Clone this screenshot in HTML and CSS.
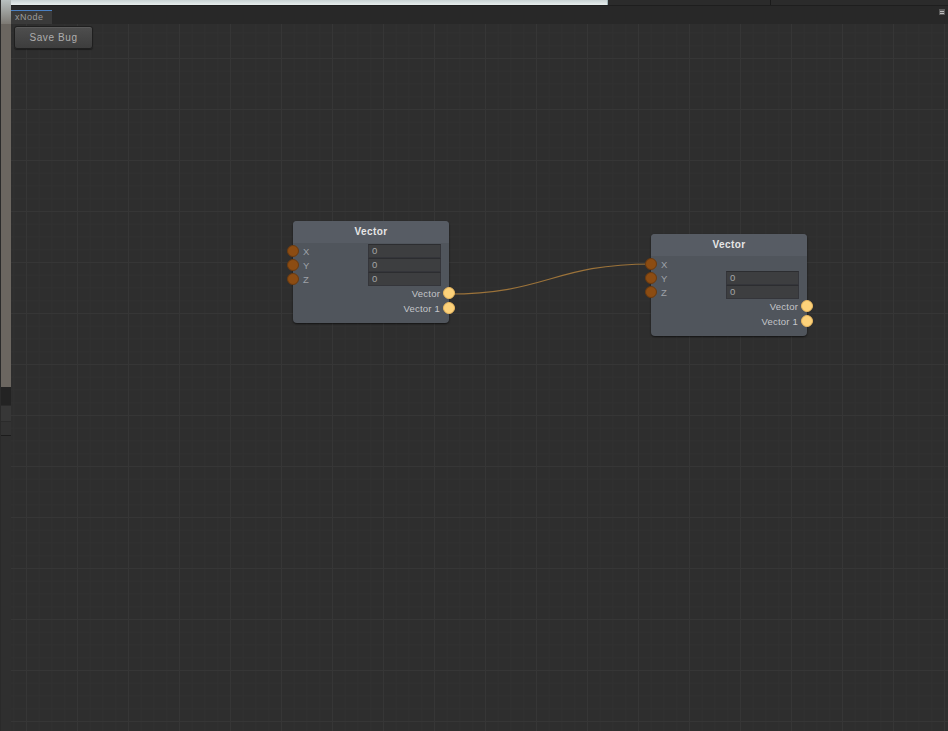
FILE: index.html
```html
<!DOCTYPE html>
<html lang="en">
<head>
    <meta charset="UTF-8">
    <meta name="viewport" content="width=device-width, initial-scale=1.0">
    <title>xNode</title>
    <link rel="stylesheet" href="styles.css">
</head>
<body>
    <div class="window">
        <div class="side">
            <div class="side-top"></div>
            <div class="side-panel"></div>
            <div class="side-tab dark"></div>
            <div class="side-tab"></div>
            <div class="side-tab last"></div>
            <div class="side-rest"></div>
        </div>

        <div class="main">
            <div class="topbar">
                <div class="top-light"></div>
                <div class="top-dark"></div>
                <div class="top-dark right"></div>
            </div>

            <div class="tabbar">
                <div class="tab">xNode</div>
                <svg class="menu-icon" width="6" height="6" viewBox="0 0 6 6">
                    <rect x="0" y="0" width="6" height="6" fill="#5a5a5a"/>
                    <rect x="1" y="2" width="4" height="1" fill="#bbb"/>
                    <rect x="1" y="4" width="4" height="1" fill="#bbb"/>
                </svg>
            </div>

            <div class="canvas">
                <button class="btn">Save Bug</button>

                <!-- connection between the two nodes -->
                <svg class="wires" width="937" height="707">
                    <path d="M 437 270 C 537 270, 541 240, 641 240" fill="none" stroke="#9c733a" stroke-width="1.2"/>
                </svg>

                <div class="node node-a">
                    <div class="node-title">Vector</div>
                    <div class="node-body">
                        <div class="row">
                            <span class="port in"></span>
                            <span class="label">X</span>
                            <span class="field">0</span>
                        </div>
                        <div class="row">
                            <span class="port in"></span>
                            <span class="label">Y</span>
                            <span class="field">0</span>
                        </div>
                        <div class="row">
                            <span class="port in"></span>
                            <span class="label">Z</span>
                            <span class="field">0</span>
                        </div>
                        <div class="row out-row">
                            <span class="label">Vector</span>
                            <span class="port out"></span>
                        </div>
                        <div class="row out-row">
                            <span class="label">Vector 1</span>
                            <span class="port out"></span>
                        </div>
                    </div>
                </div>

                <div class="node node-b">
                    <div class="node-title">Vector</div>
                    <div class="node-body">
                        <div class="row">
                            <span class="port in"></span>
                            <span class="label">X</span>
                        </div>
                        <div class="row">
                            <span class="port in"></span>
                            <span class="label">Y</span>
                            <span class="field">0</span>
                        </div>
                        <div class="row">
                            <span class="port in"></span>
                            <span class="label">Z</span>
                            <span class="field">0</span>
                        </div>
                        <div class="row out-row">
                            <span class="label">Vector</span>
                            <span class="port out"></span>
                        </div>
                        <div class="row out-row">
                            <span class="label">Vector 1</span>
                            <span class="port out"></span>
                        </div>
                    </div>
                </div>
            </div>
        </div>
    </div>
</body>
</html>
```

FILE: styles.css
```css
html, body {
    margin: 0;
    padding: 0;
}

body {
    width: 948px;
    height: 731px;
    overflow: hidden;
    background: #2d2d2d;
    font-family: "Liberation Sans", Arial, sans-serif;
    font-size: 10px;
}

.window {
    display: flex;
    height: 100%;
}

/* left strip (neighbour panel) */
.side {
    width: 11px;
    display: flex;
    flex-direction: column;
    border-left: 1px solid #2a2a2a;
    box-sizing: border-box;
}

.side-top {
    height: 24px;
    background: linear-gradient(#b9c0c0, #7d7973);
}

.side-panel {
    height: 363px;
    background: #6b6660;
}

.side-tab {
    height: 15px;
    background: #373737;
    border-bottom: 1px solid #2b2b2b;
}

.side-tab.dark {
    height: 18px;
    background: #232323;
}

.side-tab.last {
    height: 13px;
    background: #323232;
    border-bottom: 1px solid #1c1c1c;
}

.side-rest {
    flex: 1;
    background: #2f2f2f;
}

.main {
    flex: 1;
    display: flex;
    flex-direction: column;
}

/* strip of the window above */
.topbar {
    height: 5px;
    display: flex;
    border-bottom: 1px solid #1e1e1e;
}

.top-light {
    width: 596px;
    background: linear-gradient(#c9d3d4, #e8eeee);
    border-right: 1px solid #9fb3b8;
}

.top-dark {
    width: 162px;
    background: #2b2b2b;
    border-right: 1px solid #1a1a1a;
}

.top-dark.right {
    flex: 1;
    border-right: none;
}

.tabbar {
    height: 18px;
    background: #282828;
    display: flex;
    align-items: flex-end;
    position: relative;
}

.tab {
    width: 37px;
    height: 13px;
    background: #3a3a3a;
    border-top: 1px solid #4a80c4;
    color: #9c9c9c;
    font-size: 9px;
    letter-spacing: 0.5px;
    line-height: 13px;
    padding-left: 4px;
}

.menu-icon {
    position: absolute;
    right: 3px;
    top: 3px;
}

.canvas {
    flex: 1;
    position: relative;
    background-color: #2e2e2e;
    background-image:
        linear-gradient(to right, #363636 1px, transparent 1px),
        linear-gradient(to bottom, #363636 1px, transparent 1px),
        linear-gradient(to right, #313131 1px, transparent 1px),
        linear-gradient(to bottom, #313131 1px, transparent 1px);
    background-size: 51px 51px, 51px 51px, 12.75px 12.75px, 12.75px 12.75px;
    background-position: 15px 0, 0 34px, 2.25px 0, 0 8.5px;
    padding: 2px 0 0 3px;
}

.btn {
    display: block;
    width: 79px;
    height: 23px;
    border: 1px solid #1f1f1f;
    border-radius: 3px;
    background: linear-gradient(#4e4e4e, #3d3d3d);
    box-shadow: inset 0 1px 0 #5a5a5a, 0 1px 1px rgba(0, 0, 0, 0.4);
    color: #aeaeae;
    font-family: "Liberation Sans", Arial, sans-serif;
    font-size: 10px;
    letter-spacing: 0.6px;
    padding: 0;
}

.wires {
    position: absolute;
    left: 0;
    top: 0;
    pointer-events: none;
}

.node {
    position: absolute;
    width: 156px;
    height: 102px;
    background: #50555c;
    border-radius: 4px;
    box-shadow: 0 1px 2px rgba(0, 0, 0, 0.6);
}

.node-a {
    left: 282px;
    top: 197px;
}

.node-b {
    left: 640px;
    top: 210px;
}

.node-title {
    height: 22px;
    line-height: 22px;
    background: #575c64;
    border-radius: 4px 4px 0 0;
    text-align: center;
    color: #e6e6e6;
    font-weight: bold;
    font-size: 10px;
    letter-spacing: 0.4px;
}

.node-body {
    padding-top: 1px;
}

.row {
    position: relative;
    height: 14px;
    display: flex;
    align-items: center;
    padding-left: 10px;
}

.out-row {
    height: 15px;
    justify-content: flex-end;
    padding-left: 0;
    padding-right: 9px;
}

.label {
    color: #9ea2a8;
    font-size: 9.5px;
    letter-spacing: 0.2px;
}

.out-row .label {
    color: #c4c6ca;
}

.field {
    position: absolute;
    left: 75px;
    top: 0;
    width: 68px;
    height: 12px;
    background: #3d3e40;
    border: 1px solid #34353a;
    border-top-color: #2c2d30;
    color: #a6a6a6;
    font-size: 9.5px;
    line-height: 12px;
    padding-left: 3px;
}

.port {
    position: absolute;
    width: 12px;
    height: 12px;
    border-radius: 50%;
    top: 1px;
    box-sizing: border-box;
}

.port.in {
    left: -6px;
    background: #8c4c12;
    border: 1px solid #6a3a10;
}

.port.out {
    right: -6px;
    background: #fdd27a;
    border: 1px solid #e9b860;
}
```
